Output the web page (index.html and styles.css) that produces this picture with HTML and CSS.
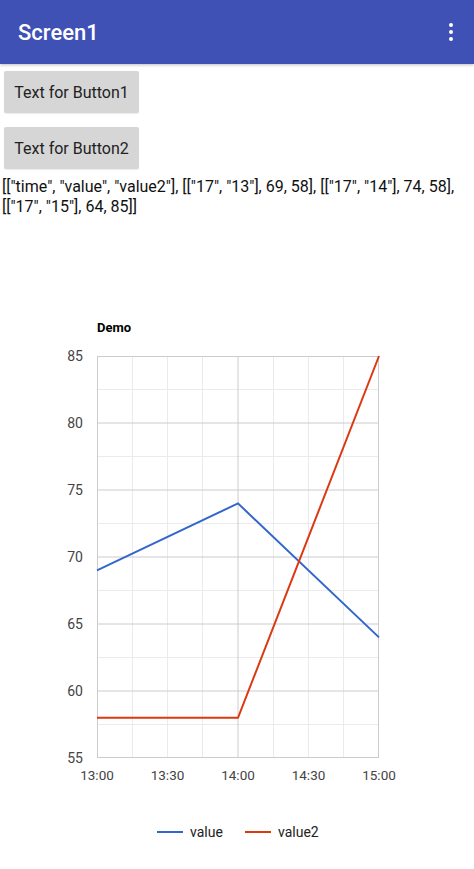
FILE: index.html
```html
<!DOCTYPE html>
<html>
<head>
<meta charset="utf-8">
<link rel="stylesheet" href="styles.css">
</head>
<body>
<header class="appbar">
  <span class="title">Screen1</span>
  <span class="menu"><i></i><i></i><i></i></span>
</header>
<main class="content">
  <button class="btn">Text for Button1</button>
  <button class="btn btn2">Text for Button2</button>
  <p class="data">[["time", "value", "value2"], [["17", "13"], 69, 58], [["17", "14"], 74, 58], [["17", "15"], 64, 85]]</p>
  <svg class="chart" width="474" height="569" viewBox="0 0 474 569" xmlns="http://www.w3.org/2000/svg">
    <text class="ctitle" x="97" y="31.5">Demo</text>
    <g class="minor">
      <line x1="97" x2="379" y1="89.5" y2="89.5"/>
      <line x1="97" x2="379" y1="156.5" y2="156.5"/>
      <line x1="97" x2="379" y1="223.5" y2="223.5"/>
      <line x1="97" x2="379" y1="290.5" y2="290.5"/>
      <line x1="97" x2="379" y1="357.5" y2="357.5"/>
      <line x1="97" x2="379" y1="424.5" y2="424.5"/>
      <line x1="132.5" x2="132.5" y1="56" y2="458"/>
      <line x1="167.5" x2="167.5" y1="56" y2="458"/>
      <line x1="202.5" x2="202.5" y1="56" y2="458"/>
      <line x1="273.5" x2="273.5" y1="56" y2="458"/>
      <line x1="308.5" x2="308.5" y1="56" y2="458"/>
      <line x1="343.5" x2="343.5" y1="56" y2="458"/>
    </g>
    <g class="major">
      <line x1="97" x2="379" y1="56.5" y2="56.5"/>
      <line x1="97" x2="379" y1="123" y2="123"/>
      <line x1="97" x2="379" y1="190" y2="190"/>
      <line x1="97" x2="379" y1="257" y2="257"/>
      <line x1="97" x2="379" y1="324" y2="324"/>
      <line x1="97" x2="379" y1="391" y2="391"/>
      <line x1="97" x2="379" y1="457.5" y2="457.5"/>
      <line x1="97.5" x2="97.5" y1="56" y2="458"/>
      <line x1="238" x2="238" y1="56" y2="458"/>
      <line x1="378.5" x2="378.5" y1="56" y2="458"/>
    </g>
    <g class="ylab">
      <text x="83" y="60.5">85</text>
      <text x="83" y="127.5">80</text>
      <text x="83" y="194.5">75</text>
      <text x="83" y="261.5">70</text>
      <text x="83" y="328.5">65</text>
      <text x="83" y="395.5">60</text>
      <text x="83" y="462.5">55</text>
    </g>
    <g class="xlab">
      <text x="97" y="479.5">13:00</text>
      <text x="167.5" y="479.5">13:30</text>
      <text x="238" y="479.5">14:00</text>
      <text x="308.5" y="479.5">14:30</text>
      <text x="379" y="479.5">15:00</text>
    </g>
    <polyline class="s1" points="97,270.4 238,203.4 379,337.4"/>
    <polyline class="s2" points="97,417.8 238,417.8 379,56"/>
    <line class="s1" x1="157" x2="183" y1="532" y2="532"/>
    <text class="leg" x="190" y="537">value</text>
    <line class="s2" x1="245" x2="271" y1="532" y2="532"/>
    <text class="leg" x="278" y="537">value2</text>
  </svg>
</main>
</body>
</html>
```
FILE: styles.css
```css
* { box-sizing: border-box; }
html, body { margin: 0; padding: 0; background: #fff; }
body { font-family: Roboto, "Liberation Sans", sans-serif; width: 474px; height: 869px; overflow: hidden; }
.appbar {
  height: 64px;
  background: #3f51b5;
  display: flex;
  align-items: center;
  justify-content: space-between;
  padding: 0 21px 0 18px;
  box-shadow: 0 1px 3px rgba(0,0,0,0.25);
  position: relative;
  z-index: 1;
}
.title { color: #fff; font-size: 22px; font-weight: 500; }
.menu { display: flex; flex-direction: column; gap: 3px; align-items: center; }
.menu i { display: block; width: 4px; height: 4px; border-radius: 50%; background: #fff; }
.content { display: flex; flex-direction: column; align-items: flex-start; }
.btn {
  margin: 7px 0 0 4px;
  width: 135px;
  height: 42px;
  border: none;
  border-radius: 2px;
  background: #d6d6d6;
  color: #222;
  font-family: Roboto, "Liberation Sans", sans-serif;
  font-size: 16px;
  padding: 0;
  box-shadow: 0 1px 1px rgba(0,0,0,0.08);
}
.btn2 { margin-top: 14px; }
.data {
  margin: 8px 0 0 2px;
  font-size: 16px;
  line-height: 19.5px;
  color: #111;
  width: 472px;
}
.chart { display: block; margin-top: 84px; font-family: Roboto, "Liberation Sans", sans-serif; }
.ctitle { font-size: 13px; font-weight: 700; fill: #000; }
.minor line { stroke: #ebebeb; stroke-width: 1; }
.major line { stroke: #cccccc; stroke-width: 1; }
.ylab text { font-size: 14px; fill: #444; text-anchor: end; }
.xlab text { font-size: 13.5px; fill: #444; text-anchor: middle; }
.s1 { fill: none; stroke: #3366cc; stroke-width: 2; }
.s2 { fill: none; stroke: #dc3912; stroke-width: 2; }
.leg { font-size: 14px; fill: #222; }
```
